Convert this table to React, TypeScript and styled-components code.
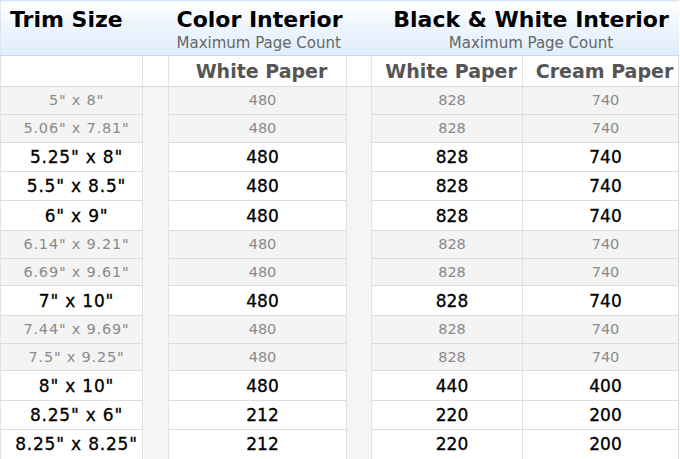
import React from "react";
import styled, { createGlobalStyle } from "styled-components";

const Global = createGlobalStyle`
  html, body { margin: 0; padding: 0; background: #ffffff; }
  body { font-family: "DejaVu Sans", Verdana, sans-serif; }
`;

const Table = styled.table`
  border-collapse: collapse;
  table-layout: fixed;
  width: 678px;
  border-left: 1px solid #dde6ee;
`;

const Col = styled.col<{ $w: number }>`
  width: ${(p) => p.$w}px;
`;

const TitleCell = styled.th<{ $align?: string; $pl?: number }>`
  height: 55px;
  padding: 6px 0 0 ${(p) => p.$pl ?? 0}px;
  box-sizing: border-box;
  vertical-align: top;
  text-align: ${(p) => p.$align ?? "center"};
  background: linear-gradient(#ffffff 0%, #eef5fd 45%, #e0eefc 100%);
  border-top: 1px solid #d6e6f7;
  border-bottom: 1px solid #c3daf3;
  font-weight: normal;
`;

const Title = styled.div`
  font-size: 22px;
  font-weight: bold;
  color: #000;
  line-height: 26px;
  white-space: nowrap;
`;

const Subtitle = styled.div`
  margin-top: 1px;
  font-size: 15px;
  color: #666;
  line-height: 18px;
  white-space: nowrap;
`;

const SubCell = styled.th`
  height: 31px;
  padding: 0 0 0 8px;
  box-sizing: border-box;
  background: #fff;
  border-right: 1px solid #e4e4e4;
  border-bottom: 1px solid #dadada;
  font-size: 19px;
  font-weight: bold;
  color: #555;
  white-space: nowrap;
  text-align: center;
  &:last-child { border-right: 1px solid #dadada; }
`;

const Row = styled.tr<{ $strong: boolean }>`
  height: ${(p) => (p.$strong ? 29.4 : 27.8)}px;
  background: ${(p) => (p.$strong ? "#ffffff" : "#f4f4f4")};
  color: ${(p) => (p.$strong ? "#000" : "#8a8a8a")};
  font-size: ${(p) => (p.$strong ? "17px" : "14.5px")};
  -webkit-text-stroke: ${(p) => (p.$strong ? "0.3px #000" : "0")};
`;

const Cell = styled.td<{ $size?: boolean }>`
  padding: 0 0 0 10px;
  text-align: center;
  white-space: nowrap;
  letter-spacing: ${(p) => (p.$size ? "0.8px" : "0")};
  border-bottom: 1px solid #dcdcdc;
  border-right: 1px solid #e2e2e2;
  &:last-child { border-right: 1px solid #d6d6d6; }
`;

const Spacer = styled.td`
  background: #f5f5f5;
  border-right: 1px solid #e4e4e4;
  border-bottom: 1px solid #f0f0f0;
  padding: 0;
`;

type R = { size: string; c: string; w: string; cr: string; strong: boolean };

const rows: R[] = [
  { size: '5" x 8"', c: "480", w: "828", cr: "740", strong: false },
  { size: '5.06" x 7.81"', c: "480", w: "828", cr: "740", strong: false },
  { size: '5.25" x 8"', c: "480", w: "828", cr: "740", strong: true },
  { size: '5.5" x 8.5"', c: "480", w: "828", cr: "740", strong: true },
  { size: '6" x 9"', c: "480", w: "828", cr: "740", strong: true },
  { size: '6.14" x 9.21"', c: "480", w: "828", cr: "740", strong: false },
  { size: '6.69" x 9.61"', c: "480", w: "828", cr: "740", strong: false },
  { size: '7" x 10"', c: "480", w: "828", cr: "740", strong: true },
  { size: '7.44" x 9.69"', c: "480", w: "828", cr: "740", strong: false },
  { size: '7.5" x 9.25"', c: "480", w: "828", cr: "740", strong: false },
  { size: '8" x 10"', c: "480", w: "440", cr: "400", strong: true },
  { size: '8.25" x 6"', c: "212", w: "220", cr: "200", strong: true },
  { size: '8.25" x 8.25"', c: "212", w: "220", cr: "200", strong: true },
];

export default function App() {
  return (
    <>
      <Global />
      <Table>
        <colgroup>
          <Col $w={142} />
          <Col $w={26} />
          <Col $w={178} />
          <Col $w={25} />
          <Col $w={151} />
          <Col $w={156} />
        </colgroup>
        <thead>
          <tr>
            <TitleCell colSpan={2} $align="left" $pl={9}>
              <Title>Trim Size</Title>
            </TitleCell>
            <TitleCell colSpan={2} $align="left" $pl={8}>
              <Title>Color Interior</Title>
              <Subtitle>Maximum Page Count</Subtitle>
            </TitleCell>
            <TitleCell colSpan={2} $pl={12}>
              <Title>Black &amp; White Interior</Title>
              <Subtitle>Maximum Page Count</Subtitle>
            </TitleCell>
          </tr>
          <tr>
            <SubCell />
            <SubCell />
            <SubCell>White Paper</SubCell>
            <SubCell />
            <SubCell>White Paper</SubCell>
            <SubCell>Cream Paper</SubCell>
          </tr>
        </thead>
        <tbody>
          {rows.map((r, i) => (
            <Row key={r.size} $strong={r.strong}>
              <Cell $size>{r.size}</Cell>
              {i === 0 && <Spacer rowSpan={rows.length} />}
              <Cell>{r.c}</Cell>
              {i === 0 && <Spacer rowSpan={rows.length} />}
              <Cell>{r.w}</Cell>
              <Cell>{r.cr}</Cell>
            </Row>
          ))}
        </tbody>
      </Table>
    </>
  );
}
